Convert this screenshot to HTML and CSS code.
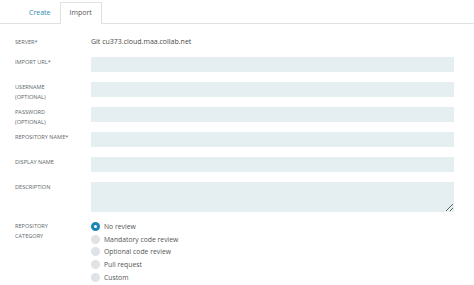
FILE: index.html
```html
<!DOCTYPE html>
<html>
<head>
  <title>Import Repository</title>
  <link rel="stylesheet" href="styles.css">
</head>
<body>
  <div class="tabs">
    <div class="tab">Create</div>
    <div class="tab active">Import</div>
  </div>

  <form class="form">
    <div class="row server">
      <label>Server*</label>
      <div class="value">Git cu373.cloud.maa.collab.net</div>
    </div>
    <div class="row">
      <label>Import URL*</label>
      <input type="text">
    </div>
    <div class="row">
      <label>Username<br>(optional)</label>
      <input type="text">
    </div>
    <div class="row">
      <label>Password<br>(optional)</label>
      <input type="password">
    </div>
    <div class="row">
      <label>Repository name*</label>
      <input type="text">
    </div>
    <div class="row">
      <label>Display name</label>
      <input type="text">
    </div>
    <div class="row">
      <label>Description</label>
      <textarea></textarea>
    </div>
    <div class="row category">
      <label>Repository<br>category</label>
      <div class="radios">
        <div class="radio checked">No review</div>
        <div class="radio">Mandatory code review</div>
        <div class="radio">Optional code review</div>
        <div class="radio">Pull request</div>
        <div class="radio">Custom</div>
      </div>
    </div>
  </form>
</body>
</html>
```

FILE: styles.css
```css
body {
  margin: 0;
  font-family: "Open Sans", "Noto Sans", sans-serif;
  color: #555;
  background: #fff;
}

.tabs {
  display: flex;
  height: 23px;
  padding-left: 20px;
  border-bottom: 1px solid #dfe2e3;
  align-items: flex-end;
}

.tab {
  font-size: 7px;
  color: #2d8ab3;
  padding: 0 9px;
  height: 21px;
  line-height: 21px;
  box-sizing: border-box;
}

.tab.active {
  color: #555;
  background: #fff;
  border: 1px solid #dfe2e3;
  border-bottom: none;
  height: 22px;
  margin-bottom: -1px;
  padding: 0 9px;
  line-height: 20px;
}

.form {
  padding: 10px 0 0 15px;
}

.row {
  display: grid;
  grid-template-columns: 76px 363px;
  margin-bottom: 10px;
}

.row label {
  height: 15px;
  font-size: 5.6px;
  text-transform: uppercase;
  line-height: 10px;
  color: #62686a;
}

.row.server {
  height: 15px;
  margin-bottom: 8px;
  align-items: center;
}

.row.server label {
  height: auto;
}

.value {
  font-size: 7px;
  color: #4a4a4a;
}

input,
textarea {
  display: block;
  height: 15px;
  margin: 0;
  border: none;
  background: #e5eef0;
  padding: 0;
  box-sizing: border-box;
}

textarea {
  height: 30px;
  resize: vertical;
}

.row.category {
  margin-top: -2px;
}

.row.category label {
  padding-top: 1px;
}

.radios {
  display: flex;
  flex-direction: column;
}

.radio {
  display: flex;
  align-items: center;
  height: 12.7px;
  font-size: 6.8px;
  color: #555;
}

.radio::before {
  content: "";
  width: 9px;
  height: 9px;
  border-radius: 50%;
  background: #dfe3e5;
  margin-right: 4px;
  box-sizing: border-box;
}

.radio.checked::before {
  background: #fff;
  border: 3px solid #1b86b3;
}
```
